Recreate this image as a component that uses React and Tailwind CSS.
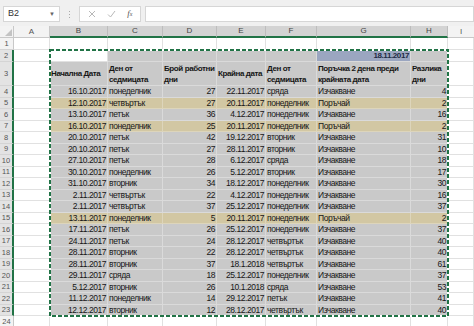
import React from "react";

const cols = [
  { key: "A", w: "w-[36px]" },
  { key: "B", w: "w-[58px]" },
  { key: "C", w: "w-[55px]" },
  { key: "D", w: "w-[54px]" },
  { key: "E", w: "w-[49px]" },
  { key: "F", w: "w-[51px]" },
  { key: "G", w: "w-[94px]" },
  { key: "H", w: "w-[37px]" },
];

const data = [
  ["16.10.2017", "понеделник", "27", "22.11.2017", "сряда", "Изчакване", "4", false],
  ["12.10.2017", "четвъртък", "27", "20.11.2017", "понеделник", "Поръчай", "2", true],
  ["13.10.2017", "петък", "36", "4.12.2017", "понеделник", "Изчакване", "16", false],
  ["16.10.2017", "понеделник", "25", "20.11.2017", "понеделник", "Поръчай", "2", true],
  ["20.10.2017", "петък", "42", "19.12.2017", "вторник", "Изчакване", "31", false],
  ["20.10.2017", "петък", "27", "28.11.2017", "вторник", "Изчакване", "10", false],
  ["27.10.2017", "петък", "28", "6.12.2017", "сряда", "Изчакване", "18", false],
  ["30.10.2017", "понеделник", "26", "5.12.2017", "вторник", "Изчакване", "17", false],
  ["31.10.2017", "вторник", "34", "18.12.2017", "понеделник", "Изчакване", "30", false],
  ["2.11.2017", "четвъртък", "22", "4.12.2017", "понеделник", "Изчакване", "16", false],
  ["2.11.2017", "четвъртък", "37", "25.12.2017", "понеделник", "Изчакване", "37", false],
  ["13.11.2017", "понеделник", "5", "20.11.2017", "понеделник", "Поръчай", "2", true],
  ["17.11.2017", "петък", "26", "25.12.2017", "понеделник", "Изчакване", "37", false],
  ["24.11.2017", "петък", "24", "28.12.2017", "четвъртък", "Изчакване", "40", false],
  ["28.11.2017", "вторник", "22", "28.12.2017", "четвъртък", "Изчакване", "40", false],
  ["28.11.2017", "вторник", "37", "18.1.2018", "четвъртък", "Изчакване", "61", false],
  ["29.11.2017", "сряда", "18", "25.12.2017", "понеделник", "Изчакване", "37", false],
  ["5.12.2017", "вторник", "26", "10.1.2018", "сряда", "Изчакване", "53", false],
  ["11.12.2017", "понеделник", "14", "29.12.2017", "петък", "Изчакване", "41", false],
  ["12.12.2017", "вторник", "12", "28.12.2017", "четвъртък", "Изчакване", "40", false],
];

const RowHead = ({ n, sel, h }) => (
  <div
    className={`w-[14px] shrink-0 ${h} flex items-center justify-center border-b border-[#d4d4d4] text-[7.5px] tracking-normal text-[#555] ${
      sel ? "bg-[#e3e3e3] border-r-2 border-r-[#217346]" : "bg-[#f3f3f3] border-r border-r-[#c8c8c8]"
    }`}
  >
    {n}
  </div>
);

const Cell = ({ w, bg, line, align = "left", bold, wrap, children }) => (
  <div
    className={`${w} shrink-0 h-full ${bg} border-r border-b ${line} flex items-center px-[1px] overflow-hidden ${
      align === "right" ? "justify-end" : "justify-start"
    } ${bold ? "font-bold text-[8px] tracking-[-0.4px]" : ""} ${wrap ? "whitespace-normal leading-[11px]" : "whitespace-nowrap"}`}
  >
    {wrap ? <span className="block">{children}</span> : children}
  </div>
);

const Blank = ({ w }) => <Cell w={w} bg="bg-white" line="border-[#e1e1e1]" />;

export default function App() {
  const selLine = "border-[#dadada]";
  const sel = "bg-[#c9c9c9]";
  return (
    <div className="w-[474px] h-[326px] overflow-hidden bg-white font-['Liberation_Sans',Arial,sans-serif] text-[8.5px] tracking-[-0.45px] text-[#161616]">
      {/* formula bar */}
      <div className="h-[26px] bg-[#f0f0f0] flex items-start pt-[6px] pl-[3px] tracking-normal">
        <div className="w-[57px] h-[16px] bg-white border border-[#d6d6d6] flex items-center justify-between px-[4px] text-[9px] text-[#333]">
          <span>B2</span>
          <span className="text-[6px] text-[#666]">▼</span>
        </div>
        <div className="w-[19px] h-[16px] flex flex-col items-center justify-center gap-[2px]">
          <span className="w-[1px] h-[1px] bg-[#aaa]" />
          <span className="w-[1px] h-[1px] bg-[#aaa]" />
          <span className="w-[1px] h-[1px] bg-[#aaa]" />
        </div>
        <div className="w-[62px] h-[16px] bg-white border border-[#d6d6d6] flex items-center justify-around px-[2px]">
          <svg width="8" height="8" viewBox="0 0 8 8">
            <path d="M1 1L7 7M7 1L1 7" stroke="#b8b8b8" strokeWidth="1" />
          </svg>
          <svg width="9" height="8" viewBox="0 0 9 8">
            <path d="M1 4.5L3.5 7L8 1" stroke="#b8b8b8" strokeWidth="1" fill="none" />
          </svg>
          <span className="italic text-[9px] text-[#555] font-['Liberation_Serif',serif]">
            f<span className="text-[6px]">x</span>
          </span>
        </div>
        <div className="flex-1 ml-[4px] h-[16px] bg-white border border-[#d6d6d6]" />
      </div>

      <div className="relative">
        {/* column headers */}
        <div className="flex h-[12px] tracking-normal">
          <div className="w-[14px] shrink-0 bg-[#f3f3f3] border-r border-b border-[#c8c8c8] flex items-end justify-end p-[1px]">
            <svg width="7" height="7" viewBox="0 0 7 7">
              <path d="M7 0L7 7L0 7Z" fill="#c3c3c3" />
            </svg>
          </div>
          {cols.map((c) => {
            const s = c.key !== "A";
            return (
              <div
                key={c.key}
                className={`${c.w} shrink-0 flex items-center justify-center text-[8px] border-r ${
                  s
                    ? "bg-[#d3d3d3] text-[#444] border-r-[#bdbdbd] border-b-2 border-b-[#217346]"
                    : "bg-[#f3f3f3] text-[#555] border-r-[#c8c8c8] border-b border-b-[#c8c8c8]"
                }`}
              >
                {c.key}
              </div>
            );
          })}
          <div className="flex-1 bg-[#f3f3f3] border-b border-[#c8c8c8] flex items-center justify-center text-[8px] text-[#555]">I</div>
        </div>

        {/* row 1 */}
        <div className="flex h-[12px]">
          <RowHead n={1} h="h-[12px]" />
          {cols.map((c) => (
            <Blank key={c.key} w={c.w} />
          ))}
          <Blank w="flex-1" />
        </div>

        {/* row 2 */}
        <div className="flex h-[12px]">
          <RowHead n={2} sel h="h-[12px]" />
          <Blank w="w-[36px]" />
          <Cell w="w-[58px]" bg="bg-white" line="border-[#e1e1e1]" />
          <Cell w="w-[55px]" bg={sel} line={selLine} />
          <Cell w="w-[54px]" bg={sel} line={selLine} />
          <Cell w="w-[49px]" bg={sel} line={selLine} />
          <Cell w="w-[51px]" bg={sel} line={selLine} />
          <Cell w="w-[94px]" bg="bg-[#9ba6c0]" line={selLine} align="right" bold>
            <span className="text-[#1f2a44]">18.11.2017</span>
          </Cell>
          <Cell w="w-[37px]" bg={sel} line={selLine} />
          <Blank w="flex-1" />
        </div>

        {/* row 3 headers */}
        <div className="flex h-[24px]">
          <RowHead n={3} sel h="h-[24px]" />
          <Blank w="w-[36px]" />
          <Cell w="w-[58px]" bg={sel} line={selLine} bold>Начална Дата</Cell>
          <Cell w="w-[55px]" bg={sel} line={selLine} bold wrap>Ден от седмицата</Cell>
          <Cell w="w-[54px]" bg={sel} line={selLine} bold wrap>Брой работни дни</Cell>
          <Cell w="w-[49px]" bg={sel} line={selLine} bold>Крайна дата</Cell>
          <Cell w="w-[51px]" bg={sel} line={selLine} bold wrap>Ден от седмицата</Cell>
          <Cell w="w-[94px]" bg={sel} line={selLine} bold wrap>Поръчка 2 дена преди крайната дата</Cell>
          <Cell w="w-[37px]" bg={sel} line={selLine} bold wrap>Разлика дни</Cell>
          <Blank w="flex-1" />
        </div>

        {/* data rows */}
        {data.map((r, i) => {
          const h = i % 2 === 0 ? "h-[12px]" : "h-[11px]";
          const bg = r[7] ? "bg-[#d2c7a3]" : sel;
          const line = r[7] ? "border-[#ddd5bb]" : selLine;
          return (
            <div key={i} className={`flex ${h}`}>
              <RowHead n={i + 4} sel h={h} />
              <Blank w="w-[36px]" />
              <Cell w="w-[58px]" bg={bg} line={line} align="right">{r[0]}</Cell>
              <Cell w="w-[55px]" bg={bg} line={line}>{r[1]}</Cell>
              <Cell w="w-[54px]" bg={bg} line={line} align="right">{r[2]}</Cell>
              <Cell w="w-[49px]" bg={bg} line={line} align="right">{r[3]}</Cell>
              <Cell w="w-[51px]" bg={bg} line={line}>{r[4]}</Cell>
              <Cell w="w-[94px]" bg={bg} line={line}>{r[5]}</Cell>
              <Cell w="w-[37px]" bg={bg} line={line} align="right">{r[6]}</Cell>
              <Blank w="flex-1" />
            </div>
          );
        })}

        {/* row 24 */}
        <div className="flex h-[12px]">
          <RowHead n={24} h="h-[12px]" />
          {cols.map((c) => (
            <Blank key={c.key} w={c.w} />
          ))}
          <Blank w="flex-1" />
        </div>

        {/* copy marquee */}
        <svg className="absolute left-[49px] top-[23px] pointer-events-none" width="400" height="268">
          <rect x="1" y="1" width="398" height="266" fill="none" stroke="#ffffff" strokeWidth="2" />
          <rect x="1" y="1" width="398" height="266" fill="none" stroke="#217346" strokeWidth="2" strokeDasharray="4 2" />
        </svg>
      </div>
    </div>
  );
}
